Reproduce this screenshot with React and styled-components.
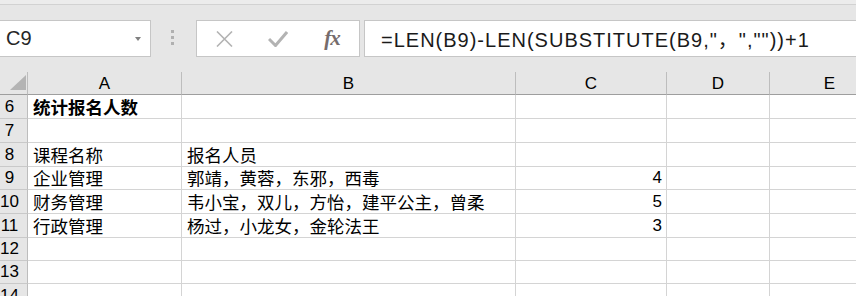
import React from "react";
import styled, { createGlobalStyle } from "styled-components";

const GlobalStyle = createGlobalStyle`
  html, body {
    margin: 0;
    padding: 0;
    overflow: hidden;
    background: #e6e6e6;
  }
`;

const columns = [
  { key: "A", width: 154 },
  { key: "B", width: 334 },
  { key: "C", width: 151 },
  { key: "D", width: 103 },
  { key: "E", width: 120 },
];

const rows = [
  { n: 6, h: 24, a: "统计报名人数", bold: true },
  { n: 7, h: 24 },
  { n: 8, h: 24, a: "课程名称", b: "报名人员" },
  { n: 9, h: 23, a: "企业管理", b: "郭靖，黄蓉，东邪，西毒", c: 4 },
  { n: 10, h: 24, a: "财务管理", b: "韦小宝，双儿，方怡，建平公主，曾柔", c: 5 },
  { n: 11, h: 24, a: "行政管理", b: "杨过，小龙女，金轮法王", c: 3 },
  { n: 12, h: 23 },
  { n: 13, h: 23 },
  { n: 14, h: 24 },
];

const App = () => {
  return (
    <Page>
      <GlobalStyle />
      <TopStrip />
      <Toolbar>
        <NameBox>
          <NameText>C9</NameText>
          <Caret />
        </NameBox>
        <Grip>
          <Dot />
          <Dot />
          <Dot />
        </Grip>
        <FxBox>
          <FxButton>
            <svg width="17" height="16" viewBox="0 0 17 16">
              <path d="M1 0.5 L16 15.5 M16 0.5 L1 15.5" stroke="#b3b3b3" strokeWidth="1.6" fill="none" />
            </svg>
          </FxButton>
          <FxButton>
            <svg width="20" height="17" viewBox="0 0 20 17">
              <path d="M1 9 L7.5 15.5 L19 2" stroke="#b3b3b3" strokeWidth="3" fill="none" />
            </svg>
          </FxButton>
          <FxButton>
            <FxLabel>fx</FxLabel>
          </FxButton>
        </FxBox>
        <FormulaBox>=LEN(B9)-LEN(SUBSTITUTE(B9,"，",""))+1</FormulaBox>
      </Toolbar>
      <Sheet $cols={columns.map((c) => c.width + "px").join(" ")}>
        <Corner>
          <svg width="16" height="15" viewBox="0 0 16 15">
            <polygon points="16,0 16,15 0,15" fill="#b4b4b4" />
          </svg>
        </Corner>
        {columns.map((c) => (
          <ColHead key={c.key}>{c.key}</ColHead>
        ))}
        {rows.map((r) => (
          <React.Fragment key={r.n}>
            <RowHead $h={r.h}>{r.n}</RowHead>
            <Cell $h={r.h} $bold={r.bold}>{r.a}</Cell>
            <Cell $h={r.h}>{r.b}</Cell>
            <NumCell $h={r.h}>{r.c}</NumCell>
            <Cell $h={r.h} />
            <Cell $h={r.h} />
          </React.Fragment>
        ))}
      </Sheet>
    </Page>
  );
};

const Page = styled.div`
  width: 856px;
  height: 296px;
  overflow: hidden;
  background: #e6e6e6;
`;

const TopStrip = styled.div`
  height: 4px;
  background: #ececec;
  border-bottom: 1px solid #d2d2d2;
`;

const Toolbar = styled.div`
  display: flex;
  align-items: flex-start;
  height: 67px;
  padding-top: 15px;
  box-sizing: border-box;
`;

const NameBox = styled.div`
  display: flex;
  align-items: center;
  justify-content: space-between;
  width: 152px;
  height: 37px;
  margin-left: -1px;
  box-sizing: border-box;
  border: 1px solid #c6c6c6;
  background: #fff;
  padding: 0 9px 0 6px;
`;

const NameText = styled.span`
  font-family: "Liberation Sans", Arial, sans-serif;
  font-size: 20px;
  color: #262626;
`;

const Caret = styled.span`
  width: 0;
  height: 0;
  border-left: 3.5px solid transparent;
  border-right: 3.5px solid transparent;
  border-top: 4px solid #808080;
`;

const Grip = styled.div`
  display: flex;
  flex-direction: column;
  gap: 3px;
  margin: 10px 22px 0 20px;
`;

const Dot = styled.span`
  width: 3px;
  height: 3px;
  background: #b0b0b0;
`;

const FxBox = styled.div`
  display: flex;
  align-items: center;
  width: 164px;
  height: 37px;
  box-sizing: border-box;
  border: 1px solid #c6c6c6;
  background: #fff;
`;

const FxButton = styled.div`
  width: 54px;
  display: flex;
  justify-content: center;
  align-items: center;
`;

const FxLabel = styled.span`
  font-family: "Liberation Serif", "Times New Roman", serif;
  font-style: italic;
  font-weight: bold;
  font-size: 21px;
  color: #766c6c;
  letter-spacing: -1px;
`;

const FormulaBox = styled.div`
  flex: 1;
  height: 37px;
  margin-left: 4px;
  margin-right: -2px;
  box-sizing: border-box;
  border: 1px solid #c6c6c6;
  background: #fff;
  padding-left: 16px;
  display: flex;
  align-items: center;
  font-family: "Liberation Sans", Arial, "Noto Sans CJK SC", sans-serif;
  font-size: 20px;
  letter-spacing: 1px;
  color: #1a1a1a;
  white-space: nowrap;
`;

const Sheet = styled.div`
  display: grid;
  grid-template-columns: 28px ${(p) => p.$cols};
  background: #fff;
`;

const Corner = styled.div`
  height: 23px;
  box-sizing: border-box;
  background: #e6e6e6;
  border-right: 1px solid #bdbdbd;
  border-bottom: 1px solid #9e9e9e;
  display: flex;
  align-items: flex-end;
  justify-content: flex-end;
  padding: 0 1px 4px 0;
`;

const ColHead = styled.div`
  height: 23px;
  box-sizing: border-box;
  background: #e6e6e6;
  border-right: 1px solid #bdbdbd;
  border-bottom: 1px solid #9e9e9e;
  display: flex;
  align-items: center;
  justify-content: center;
  padding-top: 1px;
  font-family: "Liberation Sans", Arial, sans-serif;
  font-size: 17px;
  color: #000;
`;

const RowHead = styled.div`
  height: ${(p) => p.$h}px;
  box-sizing: border-box;
  background: #e6e6e6;
  border-right: 1px solid #bdbdbd;
  border-bottom: 1px solid #c9c9c9;
  display: flex;
  align-items: flex-end;
  justify-content: center;
  padding: 0 8px 2px 0;
  font-family: "Liberation Sans", Arial, sans-serif;
  font-size: 17px;
  line-height: 18px;
  color: #000;
`;

const Cell = styled.div`
  height: ${(p) => p.$h}px;
  box-sizing: border-box;
  border-right: 1px solid #d4d4d4;
  border-bottom: 1px solid #d4d4d4;
  display: flex;
  align-items: flex-end;
  padding: 0 4px 2px 5px;
  font-family: "Noto Sans CJK SC", "Liberation Sans", sans-serif;
  font-size: 17.5px;
  line-height: 19px;
  font-weight: ${(p) => (p.$bold ? 700 : 400)};
  color: #000;
  white-space: nowrap;
`;

const NumCell = styled(Cell)`
  justify-content: flex-end;
  font-family: "Liberation Sans", Arial, sans-serif;
  font-size: 17px;
  line-height: 18px;
`;

export default App;
